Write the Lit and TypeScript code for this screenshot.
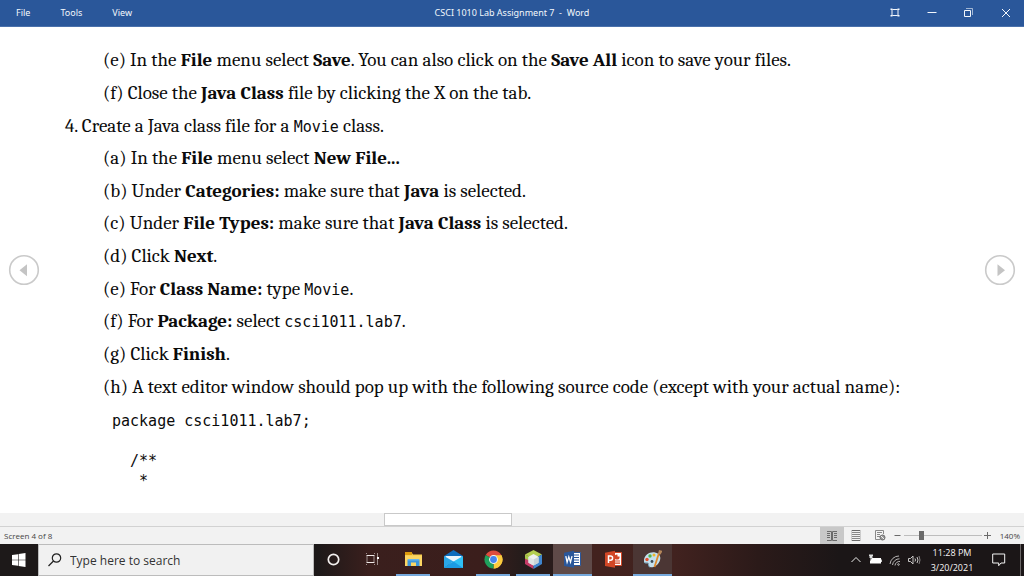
import { LitElement, html, css, svg } from "lit";
import { customElement } from "lit/decorators.js";

const b = (t: string) => html`<strong>${t}</strong>`;
const code = (t: string) => html`<code>${t}</code>`;

const PACKAGE_SOURCE = "package csci1011.lab7;\n\n  /**\n   *";

@customElement("title-bar")
class TitleBar extends LitElement {
  static styles = css`
    :host {
      display: grid;
      grid-template-columns: 1fr auto 1fr;
      align-items: center;
      height: 26px;
      background: #2a579a;
      border-bottom: 1px solid #4a71ab;
      color: #f3f7fc;
      font: 9px/16px "Noto Sans", "Open Sans", sans-serif;
    }
    .menu { display: flex; gap: 14px; padding-left: 8px; }
    .menu button, .window button {
      border: 0;
      background: none;
      color: inherit;
      font: inherit;
      padding: 0 8px;
    }
    .title { white-space: pre; }
    .window { display: flex; justify-content: flex-end; }
    .window button { width: 37px; height: 24px; padding: 0; display: grid; place-items: center; }
    svg { display: block; fill: none; stroke: currentColor; }
  `;
  render() {
    return html`
      <nav class="menu">
        <button>File</button><button>Tools</button><button>View</button>
      </nav>
      <span class="title">CSCI 1010 Lab Assignment 7  -  Word</span>
      <div class="window">
        <button aria-label="Show toolbar">
          <svg width="10" height="10" viewBox="0 0 10 10">
            <path d="M2.5 1.5h5M2.5 7.5h5M2 1v7M8 1v7" />
            <path stroke-width="1.4" d="M.5 1.2h2M7.5 1.2h2M.5 7.8h2M7.5 7.8h2" />
          </svg>
        </button>
        <button aria-label="Minimize">
          <svg width="10" height="10" viewBox="0 0 10 10"><path d="M.5 4.5h9" /></svg>
        </button>
        <button aria-label="Restore">
          <svg width="10" height="10" viewBox="0 0 10 10">
            <path d="M.5 2.500h6v6h-6z" /><path opacity=".6" d="M2 .5h6.500v6.500" />
          </svg>
        </button>
        <button aria-label="Close">
          <svg width="10" height="10" viewBox="0 0 10 10"><path d="M1 1l8 8M9 1L1 9" /></svg>
        </button>
      </div>
    `;
  }
}

@customElement("read-page")
class ReadPage extends LitElement {
  static styles = css`
    :host {
      display: grid;
      grid-template-columns: 47px 1fr 48px;
      align-items: center;
      background: #fff;
      color: #0b0b0b;
      font: 19px/24px Cambria, Caladea, "Liberation Serif", serif;
    }
    .turn { border: 0; background: none; padding: 0; justify-self: center; }
    .turn svg { display: block; }
    .doc {
      align-self: stretch;
      display: flex;
      flex-direction: column;
      padding: 17px 0 22px 18px;
      white-space: nowrap;
    }
    ol { list-style: none; margin: 0; padding: 0 0 0 38px; display: grid; grid-auto-rows: 1fr; }
    li, .step { display: flex; align-items: center; }
    .lead { flex: 2; }
    .step { flex: 1; margin: 0; }
    .tasks { flex: 8; }
    code, pre { font: 15px/20px "DejaVu Sans Mono", "Liberation Mono", monospace; }
    pre { margin: 8px 0 0 47px; }
  `;
  render() {
    const lead = [
      html`(e) In the ${b("File")} menu select ${b("Save")}. You can also click on the ${b("Save All")} icon to save your files.`,
      html`(f) Close the ${b("Java Class")} file by clicking the X on the tab.`,
    ];
    const tasks = [
      html`(a) In the ${b("File")} menu select ${b("New File...")}`,
      html`(b) Under ${b("Categories:")} make sure that ${b("Java")} is selected.`,
      html`(c) Under ${b("File Types:")} make sure that ${b("Java Class")} is selected.`,
      html`(d) Click ${b("Next")}.`,
      html`(e) For ${b("Class Name:")} type ${code("Movie")}.`,
      html`(f) For ${b("Package:")} select ${code("csci1011.lab7")}.`,
      html`(g) Click ${b("Finish")}.`,
      html`(h) A text editor window should pop up with the following source code (except with your actual name):`,
    ];
    return html`
      <button class="turn" aria-label="Previous screen">
        <svg width="32" height="32" viewBox="0 0 32 32">
          <circle cx="16" cy="16" r="14.300" fill="none" stroke="#cacaca" stroke-width="1.600" />
          <path d="M19 10.200v12L11.500 16.200z" fill="#c4c4c4" />
        </svg>
      </button>
      <article class="doc">
        <ol class="lead">${lead.map((t) => html`<li><span>${t}</span></li>`)}</ol>
        <p class="step"><span>4. Create a Java class file for a ${code("Movie")} class.</span></p>
        <ol class="tasks">${tasks.map((t) => html`<li><span>${t}</span></li>`)}</ol>
        <pre>${PACKAGE_SOURCE}</pre>
      </article>
      <button class="turn" aria-label="Next screen">
        <svg width="32" height="32" viewBox="0 0 32 32">
          <circle cx="16" cy="16" r="14.300" fill="none" stroke="#cacaca" stroke-width="1.600" />
          <path d="M13.500 10.200v12L21 16.200z" fill="#c4c4c4" />
        </svg>
      </button>
    `;
  }
}

@customElement("status-bar")
class StatusBar extends LitElement {
  static styles = css`
    :host { display: block; background: #f2f2f2; color: #444; font: 8px/17px "Open Sans", "Noto Sans", sans-serif; }
    .track { height: 13px; border-bottom: 1px solid #d2d2d2; display: grid; grid-template-columns: 3fr 1fr 4fr; }
    .thumb { grid-column: 2; box-sizing: border-box; background: #fff; border: 1px solid #c9c9c9; }
    .row { display: flex; height: 17px; align-items: center; padding: 0 4px; }
    .screen { flex: 1; }
    button { border: 0; background: none; color: inherit; padding: 0; width: 24px; height: 17px; display: grid; place-items: center; }
    button.active { background: #c8c8c8; }
    button.small { width: 12px; }
    svg { display: block; fill: none; stroke: #6a6a6a; }
    input { appearance: none; width: 78px; height: 17px; margin: 0; background: none; }
    input::-webkit-slider-runnable-track { height: 1px; background: #bdbdbd; }
    input::-webkit-slider-thumb { appearance: none; width: 5px; height: 9px; margin-top: -4px; background: #6a6a6a; }
    .zoom { margin-left: 6px; }
  `;
  render() {
    return html`
      <div class="track"><div class="thumb"></div></div>
      <div class="row">
        <span class="screen">Screen 4 of 8</span>
        <button class="active" aria-label="Read mode">
          <svg width="12" height="10" viewBox="0 0 12 10">
            <path d="M1 .5h4.500v9H1M11 .5H6.500v9H11M1 2.500h3M1 4.500h3M1 6.500h3M8 2.500h3M8 4.500h3M8 6.500h3" />
          </svg>
        </button>
        <button aria-label="Print layout">
          <svg width="10" height="11" viewBox="0 0 10 11">
            <path d="M0 .5h10M0 10.500h10" /><path d="M1 2.500h8M1 4.500h8M1 6.500h8M1 8.500h8" stroke="#888" />
            <path d="M.5 0v11M9.500 0v11" stroke="#ccc" />
          </svg>
        </button>
        <button aria-label="Web layout">
          <svg width="12" height="11" viewBox="0 0 12 11">
            <path d="M6 9.500H1.500V.5h8V4M3 2.500h5M3 4.500h3M3 6.500h3" stroke="#888" />
            <circle cx="8.500" cy="7.500" r="2.500" fill="#999" /><path d="M7 6l3 3" stroke="#eee" />
          </svg>
        </button>
        <button class="small" aria-label="Zoom out">
          <svg width="7" height="7" viewBox="0 0 7 7"><path d="M.5 3.500h6" /></svg>
        </button>
        <input type="range" min="10" max="100" value="29" aria-label="Zoom" />
        <button class="small" aria-label="Zoom in">
          <svg width="7" height="7" viewBox="0 0 7 7"><path d="M0 3.500h7M3.500 0v7" /></svg>
        </button>
        <span class="zoom">140%</span>
      </div>
    `;
  }
}

const explorerIcon = svg`
  <path d="M1 3h7l1 1.500h9V16H1z" fill="#f9cf52" /><path d="M1 2h7v3H1z" fill="#dc9a0d" />
  <path d="M1 6h17v10H1z" fill="#fcd663" />
  <path d="M3.500 16V9.500h12V16h-3.500v-3.500h-5V16z" fill="#3e97dd" /><path d="M4 9h11v1.500H4z" fill="#69b6ea" />`;
const mailIcon = svg`
  <path d="M0 6L9.500 0 19 6v5H0z" fill="#0f6cbd" /><path d="M1.500 6h16v5l-8 4-8-4z" fill="#eef5fb" />
  <path d="M0 6l9.500 5.500L0 18z" fill="#2aa6e8" /><path d="M19 6v12H0l9.500-6.500z" fill="#2fc0f5" />
  <path d="M0 18l9.500-6.500L19 18z" fill="#1c9be4" />`;
const chromeIcon = svg`
  <path d="M9.500 9.500L1.700 5A9 9 0 0 1 17.300 5z" fill="#dd4b3e" />
  <path d="M9.500 9.500L17.300 5A9 9 0 0 1 9.500 18.500z" fill="#fccb3e" />
  <path d="M9.500 9.500V18.500A9 9 0 0 1 1.700 5z" fill="#1fa05c" />
  <path d="M9.500 5.200h7.900a9 9 0 0 1-7.900 13.300l3.700-6.500z" fill="#fccb3e" />
  <circle cx="9.500" cy="9.500" r="4.400" fill="#f6f6f6" /><circle cx="9.500" cy="9.500" r="3.400" fill="#4483ee" />`;
const netbeansIcon = svg`
  <path d="M9.500 0L18 4.500 9.500 9 1 4.500z" fill="#b3ce4f" /><path d="M1 4.500L9.500 9v10L1 14z" fill="#c43b66" />
  <path d="M1 4.500l4 2v4l-4-2z" fill="#a6c94a" />
  <path d="M18 4.500L9.500 9v10l8.500-5z" fill="#3f86cf" />
  <path d="M9.500 4L14.500 6.700v6L9.500 15.500l-5-2.800v-6z" fill="#eef1ef" />
  <path d="M9.500 9.500l5-2.800v6l-5 2.800z" fill="#c9d3d6" /><path d="M9.500 9.500l-5-2.800v6l5 2.800z" fill="#dfe5e4" />`;
const wordIcon = svg`
  <path d="M9 2.500h8.500v13H9z" fill="#fff" stroke="#2a579a" />
  <path d="M11 5h5M11 7.500h5M11 10h5M11 12.500h5" stroke="#2a579a" stroke-width="1.200" />
  <path d="M1 2.700L11 .8v17L1 16z" fill="#2a579a" /><path d="M2.800 6.200l1.300 6 1.700-5.400 1.700 5.400 1.500-6" fill="none" stroke="#fff" stroke-width="1.300" />`;
const powerpointIcon = svg`
  <path d="M9 2.500h8.500v13H9z" fill="#fff" stroke="#d24726" />
  <path d="M11 11h5M11 13.200h5" stroke="#d24726" stroke-width="1.200" /><circle cx="13" cy="7" r="2.600" fill="#d24726" />
  <path d="M13.500 6.500V4a2.600 2.600 0 0 1 2.500 2.500z" fill="#fff" />
  <path d="M1 2.700L11 .8v17L1 16z" fill="#d24726" />
  <path d="M4.500 13V6h2a2 2 0 0 1 0 4.200h-2" fill="none" stroke="#fff" stroke-width="1.500" />`;
const paintIcon = svg`
  <path d="M1 11C1 5 7 1.500 12 2.500c5 1 6.500 5 4.500 9-2 4.500-7 6.500-9.500 5.500-2-.8-.5-3-2-4S1 14 1 11z" fill="#c3e0ee" />
  <path d="M1.500 12C1 14 5 12 5.500 14s-.5 2.500 1.500 3" fill="none" stroke="#7fb0c8" />
  <circle cx="4" cy="9.500" r="1.700" fill="#e2502f" /><circle cx="7" cy="6" r="1.700" fill="#57b44a" />
  <circle cx="11" cy="5" r="1.500" fill="#f0b52c" /><circle cx="9" cy="11.500" r="1.400" fill="#3a4a55" />
  <path d="M16 3l-4.500 14" stroke="#e08a2b" stroke-width="1.800" /><path d="M15 4l1-4 3.500 1-2 3.500z" fill="#b5875a" />`;
const cortanaIcon = svg`<circle cx="9.500" cy="9.500" r="5.200" fill="none" stroke="#f3f0ef" stroke-width="1.700" />`;
const taskViewIcon = svg`
  <path d="M2.500 5.500h8M2.500 12.500h8" stroke="#efe9e8" /><path d="M3 6v6M10 6v6M2.500 3v1M10.500 3v1M2.500 14v1M10.500 14v1M13.500 3v12" stroke="#9c8d8b" />
  <path d="M13 7h2v2h-2z" fill="#fff" />`;

const PINNED = [
  { name: "Cortana", icon: cortanaIcon, state: "" },
  { name: "Task View", icon: taskViewIcon, state: "" },
  { name: "File Explorer", icon: explorerIcon, state: "running" },
  { name: "Mail", icon: mailIcon, state: "" },
  { name: "Chrome", icon: chromeIcon, state: "running" },
  { name: "NetBeans", icon: netbeansIcon, state: "running" },
  { name: "Word", icon: wordIcon, state: "active" },
  { name: "PowerPoint", icon: powerpointIcon, state: "" },
  { name: "Paint", icon: paintIcon, state: "open" },
];

@customElement("task-bar")
class TaskBar extends LitElement {
  static styles = css`
    :host {
      display: flex;
      height: 32px;
      color: #f7f5f5;
      background: linear-gradient(90deg, #1d1919 0 31%, #3a1f1d 36%, #3b1e1c 47%, #251c1b 51%, #2a1c1b 54%, #42221e 58%, #41221f 66%, #2b1a19 74%, #1b1617 82%);
      font: 9px/15px "Open Sans", "Noto Sans", sans-serif;
    }
    button { border: 0; background: none; color: inherit; font: inherit; padding: 0; display: grid; place-items: center; }
    svg { display: block; }
    .start { width: 38px; }
    .search {
      box-sizing: border-box;
      width: 276px;
      display: flex;
      align-items: center;
      gap: 8px;
      padding-left: 9px;
      background: #f1f1f1;
      border: 1px solid #bcbcbc;
    }
    .search input { flex: 1; min-width: 0; border: 0; padding: 2px 0 0; background: none; font: 12px/20px "Open Sans", "Noto Sans", sans-serif; }
    .search input::placeholder { color: #333; opacity: 1; }
    .apps { display: flex; flex: 1; padding-left: 2px; }
    .app { width: 34px; margin: 0 3px; border-bottom: 2px solid transparent; }
    .app:first-child { margin-left: 0; }
    .running { border-color: #76a9dc; }
    .active, .open { width: 39px; margin: 0 1px 0 0; border-color: #76a9dc; background: #5f4a48; }
    .open { background: #4b3634; }
    .tray { display: flex; align-items: center; gap: 7px; }
    .clock { width: 48px; padding: 0 2px 0 0; text-align: center; }
    .notify { width: 28px; }
    .peek { width: 3px; height: 32px; border-left: 1px solid #6b6767; }
  `;
  render() {
    return html`
      <button class="start" aria-label="Start">
        <svg width="14" height="14" viewBox="0 0 14 14" fill="#fff">
          <path d="M0 2l6-.8v5.500H0zM6.600 1.100L13.500 0v6.700H6.600zM0 7.300h6v5.500L0 12zM6.600 7.300h6.900V14l-6.900-1.100z" />
        </svg>
      </button>
      <label class="search">
        <svg width="14" height="14" viewBox="0 0 14 14" fill="none" stroke="#222" stroke-width="1.200">
          <circle cx="8.500" cy="5" r="4.200" /><path d="M5.500 8L.5 13" />
        </svg>
        <input type="text" placeholder="Type here to search" aria-label="Search" />
      </label>
      <div class="apps">
        ${PINNED.map(
          (a) => html`<button class="app ${a.state}" aria-label=${a.name}>
            <svg width="19" height="19" viewBox="0 0 19 19">${a.icon}</svg>
          </button>`
        )}
      </div>
      <div class="tray">
        <button aria-label="Hidden icons">
          <svg width="10" height="12" viewBox="0 0 10 12" fill="none" stroke="#eee"><path d="M.5 8L5 3.500 9.500 8" /></svg>
        </button>
        <button aria-label="Battery">
          <svg width="14" height="14" viewBox="0 0 14 14">
            <path d="M4 5h9v5.500H2V8z" fill="#fff" /><path d="M13 6.500h1v2.500h-1z" fill="#ccc" />
            <path d="M1 2.500h4M2 1v2M4 1v2M3 4v3" stroke="#ddd" /><path d="M1.500 3h3v2h-3z" fill="#ddd" />
          </svg>
        </button>
        <button aria-label="Network">
          <svg width="12" height="12" viewBox="0 0 12 12" fill="none" stroke="#b8b6b6">
            <path d="M1 10A9 9 0 0 1 10 2M3.500 11A7 7 0 0 1 10.500 4.800M6 11.500A4.500 4.500 0 0 1 11 7.500" /><circle cx="9.500" cy="10.500" r=".8" />
          </svg>
        </button>
        <button aria-label="Volume">
          <svg width="13" height="12" viewBox="0 0 13 12" fill="none" stroke="#c9c7c7">
            <path d="M.5 4.500h2L5 2v8L2.500 7.500h-2z" /><path d="M7 4.500q1 1.500 0 3M9 3q2 3 0 6" /><path opacity=".6" d="M11 2q2 4 0 8" />
          </svg>
        </button>
        <div class="clock">11:28 PM<br />3/20/2021</div>
        <button class="notify" aria-label="Notifications">
          <svg width="14" height="14" viewBox="0 0 14 14" fill="none" stroke="#f4f4f4">
            <path d="M.7 1h12v9H9L6.700 12.700V10h-6z" />
          </svg>
        </button>
        <div class="peek"></div>
      </div>
    `;
  }
}

@customElement("app-root")
class AppRoot extends LitElement {
  static styles = css`
    :host { display: flex; flex-direction: column; height: 100vh; overflow: hidden; }
    .page { flex: 1; min-height: 0; }
  `;
  render() {
    return html`
      <title-bar></title-bar>
      <read-page class="page"></read-page>
      <status-bar></status-bar>
      <task-bar></task-bar>
    `;
  }
}
